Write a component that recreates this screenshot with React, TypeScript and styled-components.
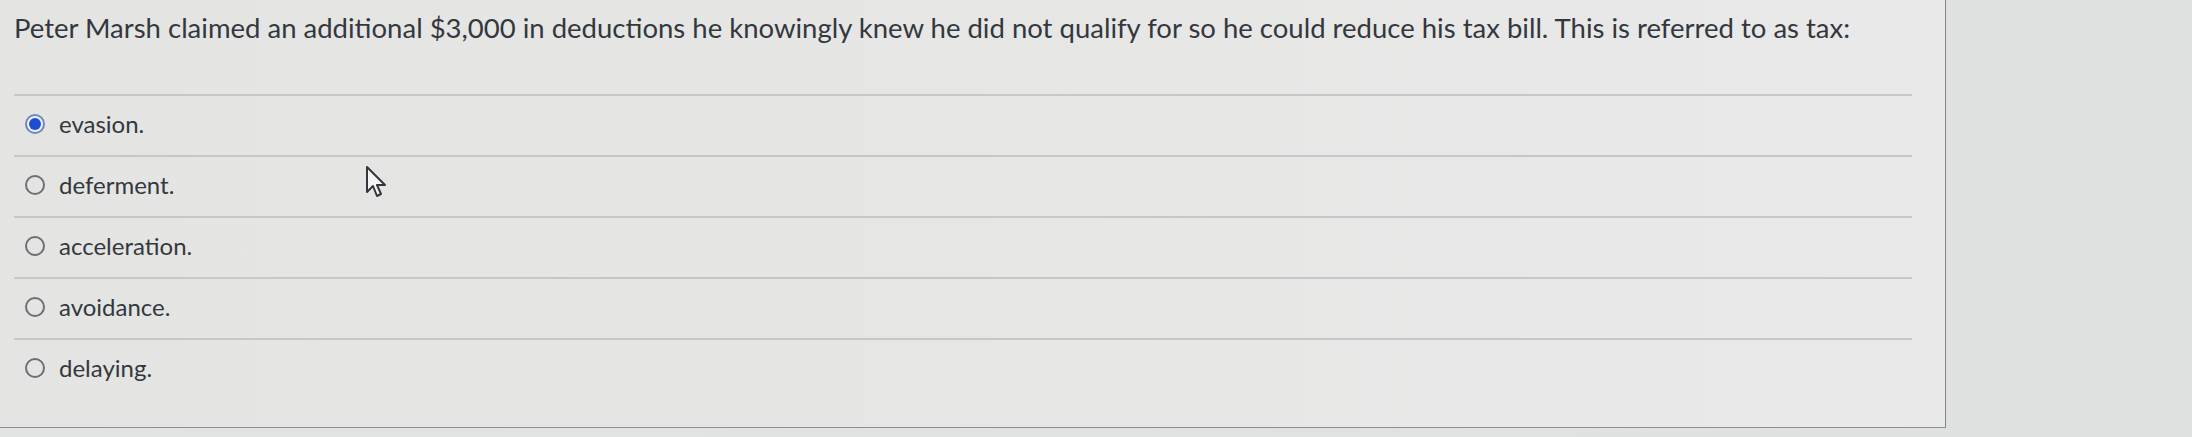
import React from "react";
import styled, { createGlobalStyle } from "styled-components";

const GlobalStyle = createGlobalStyle`
  html, body {
    margin: 0;
    padding: 0;
    background: #e1e3e3;
    font-family: Lato, "Noto Sans", "Liberation Sans", sans-serif;
  }
`;

const Page = styled.div`
  display: flex;
  width: 2192px;
  height: 437px;
  overflow: hidden;
  background: linear-gradient(90deg, #e2e4e4 0%, #dfe1e1 100%);
`;

const Panel = styled.div`
  position: relative;
  box-sizing: border-box;
  width: 1946px;
  height: 428px;
  flex: none;
  background: linear-gradient(90deg, #e4e5e3 0%, #e6e7e5 50%, #e8e9e8 100%);
  border-right: 1px solid #80848b;
  border-bottom: 1px solid #8e9194;
`;

const Question = styled.div`
  box-sizing: border-box;
  height: 94px;
  padding: 12px 14px 0;
  font-size: 27.5px;
  line-height: 32px;
  color: #34383e;
  white-space: nowrap;
`;

const OptionList = styled.div`
  display: flex;
  flex-direction: column;
  margin: 0 33px 0 14px;
`;

const OptionRow = styled.label`
  box-sizing: border-box;
  display: flex;
  align-items: center;
  gap: 14px;
  height: 61px;
  padding: 0 0 4px 11px;
  border-top: 2px solid #c6c8c8;
`;

const Radio = styled.span<{ $checked?: boolean }>`
  box-sizing: border-box;
  position: relative;
  flex: none;
  width: 20px;
  height: 20px;
  border-radius: 50%;
  border: 2px solid ${(p) => (p.$checked ? "#7085c8" : "#6c6f74")};
  background: ${(p) => (p.$checked ? "#f1f3f6" : "transparent")};

  &::after {
    content: "";
    display: ${(p) => (p.$checked ? "block" : "none")};
    position: absolute;
    left: 2px;
    top: 2px;
    width: 12px;
    height: 12px;
    border-radius: 50%;
    background: #1c4dd4;
  }
`;

const OptionText = styled.span`
  font-size: 24px;
  line-height: 30px;
  color: #34383e;
`;

const Cursor = styled.svg`
  position: absolute;
  left: 364px;
  top: 165px;
  width: 24px;
  height: 34px;
`;

const options = [
  { text: "evasion.", checked: true },
  { text: "deferment.", checked: false },
  { text: "acceleration.", checked: false },
  { text: "avoidance.", checked: false },
  { text: "delaying.", checked: false },
];

export default function App() {
  return (
    <>
      <GlobalStyle />
      <Page>
        <Panel>
          <Question>
            Peter Marsh claimed an additional $3,000 in deductions he knowingly knew he did not
            qualify for so he could reduce his tax bill. This is referred to as tax:
          </Question>
          <OptionList>
            {options.map((o) => (
              <OptionRow key={o.text}>
                <Radio $checked={o.checked} />
                <OptionText>{o.text}</OptionText>
              </OptionRow>
            ))}
          </OptionList>
          <Cursor viewBox="0 0 24 34">
            <path
              d="M3 2 L3 27 L9 21 L13 31 L17 29 L13 20 L21 20 Z"
              fill="#f4f4f4"
              stroke="#33363b"
              strokeWidth="2"
              strokeLinejoin="round"
            />
          </Cursor>
        </Panel>
      </Page>
    </>
  );
}
